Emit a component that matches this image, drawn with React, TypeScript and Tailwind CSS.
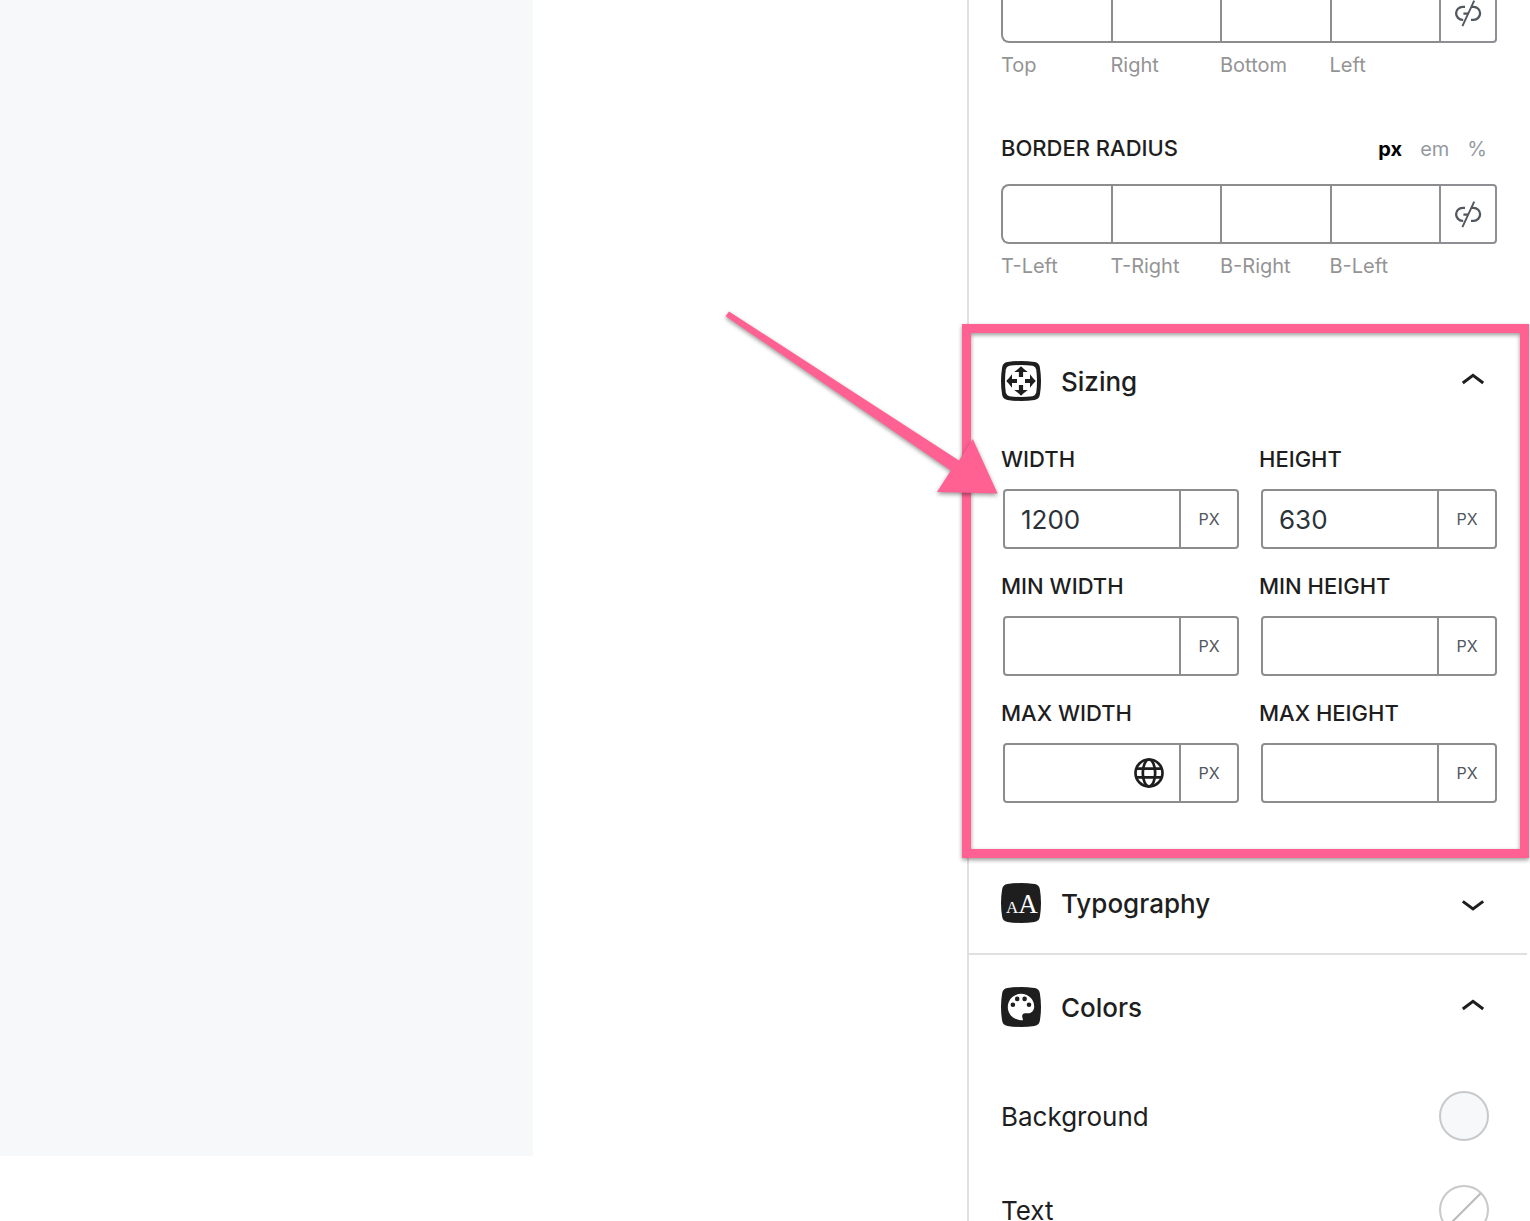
import type { ReactNode } from "react";

const SQUIRCLE =
  "M6.5 1.1Q20 -1.1 33.5 1.1Q38.2 1.8 38.9 6.5Q41.1 20 38.9 33.5Q38.2 38.2 33.5 38.9Q20 41.1 6.5 38.9Q1.8 38.2 1.1 33.5Q-1.1 20 1.1 6.5Q1.8 1.8 6.5 1.1Z";

function SizingIcon() {
  return (
    <svg viewBox="0 0 40 40" className="size-10 shrink-0" aria-hidden="true">
      <path d={SQUIRCLE} fill="#1e1e1e" />
      <path
        d="M8.4 4.8Q20 3.2 31.6 4.8Q34.6 5.4 35.2 8.4Q36.8 20 35.2 31.6Q34.6 34.6 31.6 35.2Q20 36.8 8.4 35.2Q5.4 34.6 4.8 31.6Q3.2 20 4.8 8.4Q5.4 5.4 8.4 4.8Z"
        fill="#fff"
      />
      {[0, 90, 180, 270].map((angle) => (
        <path
          key={angle}
          d="M20 5.2Q22.4 7.8 26.8 11H22.1V16H17.9V11H13.2Q17.6 7.8 20 5.2Z"
          transform={`rotate(${angle} 20 20)`}
          fill="#1e1e1e"
        />
      ))}
    </svg>
  );
}

function TypographyIcon() {
  return (
    <svg viewBox="0 0 40 40" className="size-10 shrink-0" aria-hidden="true">
      <path d={SQUIRCLE} fill="#1e1e1e" />
      <text x="5" y="30" fill="#fff" fontFamily="'Liberation Serif', serif">
        <tspan fontSize="17">A</tspan>
        <tspan fontSize="27">A</tspan>
      </text>
    </svg>
  );
}

function ColorsIcon() {
  return (
    <svg viewBox="0 0 40 40" className="size-10 shrink-0" aria-hidden="true">
      <path d={SQUIRCLE} fill="#1e1e1e" />
      <path
        d="M20 6.8C12.4 6.8 6.8 12.8 6.8 20C6.8 27.2 12.4 33.2 21.8 33.2C22.2 32 21 30.4 21.2 28.8C21.4 27.2 22.4 26.3 24 26.3H26.8C30.4 26.3 33.2 23.6 33.2 19.4C33.2 12.4 27.4 6.8 20 6.8Z"
        fill="#fff"
      />
      <g fill="#1e1e1e">
        <circle cx="11.9" cy="17.7" r="2.3" />
        <circle cx="16.2" cy="11.9" r="2.3" />
        <circle cx="23.6" cy="11.9" r="2.3" />
        <circle cx="28" cy="17.7" r="2.3" />
      </g>
    </svg>
  );
}

function UnlinkIcon() {
  return (
    <svg
      viewBox="0 0 28 28"
      className="size-7"
      fill="none"
      stroke="#50575e"
      strokeWidth="2.3"
      aria-hidden="true"
    >
      <path d="M11 7.8H8.6A6.5 6.5 0 0 0 8.6 20.8H9.2" />
      <path d="M9.4 14.6H14" />
      <path d="M17.6 7.8H19.6A6.5 6.5 0 0 1 19.6 20.8H17" />
      <path d="M20.2 1.6L8.4 27.2" strokeWidth="1.9" />
    </svg>
  );
}

function GlobeIcon() {
  return (
    <svg
      viewBox="0 0 30 30"
      className="size-[30px]"
      fill="none"
      stroke="#1e1e1e"
      strokeWidth="2.7"
      aria-hidden="true"
    >
      <circle cx="15" cy="15" r="13.5" />
      <ellipse cx="15" cy="15" rx="6.2" ry="13.5" />
      <path d="M2.2 10.6H27.8M2.2 19.4H27.8" />
    </svg>
  );
}

function Chevron({ open }: { open: boolean }) {
  return (
    <svg
      viewBox="0 0 24 16"
      className="h-4 w-6"
      fill="none"
      stroke="#1e1e1e"
      strokeWidth="3"
      aria-hidden="true"
    >
      <path d={open ? "M1.8 10L12 2.4L22.2 10" : "M1.8 6.4L12 14L22.2 6.4"} />
    </svg>
  );
}

function SidesControl({ name, sides }: { name: string; sides: string[] }) {
  return (
    <div className="flex items-start">
      <div className="grid flex-1 grid-cols-4">
        {sides.map((side) => (
          <label key={side} className="group flex flex-col-reverse gap-2">
            <span className="text-[20px] leading-7 text-[#949494]">{side}</span>
            <input
              type="text"
              className="h-[60px] w-full border-y-2 border-l-2 border-[#8d8d8f] px-4 text-[26px] outline-none group-first:rounded-l-lg"
            />
          </label>
        ))}
      </div>
      <button
        type="button"
        aria-label={`Link ${name}`}
        className="flex h-[60px] w-[58px] items-center justify-center rounded-r border-2 border-[#8d8f94]"
      >
        <UnlinkIcon />
      </button>
    </div>
  );
}

function SizeField({
  id,
  label,
  value,
  global,
}: {
  id: string;
  label: string;
  value?: string;
  global?: boolean;
}) {
  return (
    <div className="flex flex-col gap-[18px]">
      <label htmlFor={id} className="text-[22px] leading-6 font-medium uppercase">
        {label}
      </label>
      <div className="ml-0.5 flex h-[60px] rounded border-2 border-[#8d8d8f]">
        <div className="relative min-w-0 flex-1">
          <input
            id={id}
            type="text"
            defaultValue={value}
            className="h-full w-full px-4 text-[26px] text-[#2c3338] outline-none"
          />
          {global && (
            <span className="absolute inset-y-0 right-[15px] flex items-center">
              <GlobeIcon />
            </span>
          )}
        </div>
        <button
          type="button"
          aria-label={`${label} unit`}
          className="w-[58px] border-l-2 border-[#8d8d8f] text-base text-[#50575e]"
        >
          PX
        </button>
      </div>
    </div>
  );
}

function PanelHeader({ icon, title, open }: { icon: ReactNode; title: string; open: boolean }) {
  return (
    <button
      type="button"
      aria-expanded={open}
      className="flex w-full items-center justify-between pr-3 text-left"
    >
      <span className="flex items-center gap-5">
        {icon}
        <span className="pt-0.5 text-[26px] leading-[38px] font-medium">{title}</span>
      </span>
      <Chevron open={open} />
    </button>
  );
}

function Highlight() {
  return (
    <>
      <div className="pointer-events-none absolute -top-[5px] -right-0.5 -bottom-[9px] -left-[7px] border-[9px] border-[#ff6192] drop-shadow-[0_2px_2px_rgba(0,0,0,0.4)]" />
      <svg
        viewBox="0 0 280 190"
        className="pointer-events-none absolute -top-5 -left-[248px] h-[190px] w-[280px] drop-shadow-[0_2px_2px_rgba(0,0,0,0.4)]"
        aria-hidden="true"
      >
        <path
          d="M8 2.5L238 151.5L251.8 130L276.6 184.5L216 183L229.8 161.5L4.6 7.2Z"
          fill="#ff6192"
        />
      </svg>
    </>
  );
}

const sizes = [
  { id: "width", label: "Width", value: "1200" },
  { id: "height", label: "Height", value: "630" },
  { id: "min-width", label: "Min Width" },
  { id: "min-height", label: "Min Height" },
  { id: "max-width", label: "Max Width", global: true },
  { id: "max-height", label: "Max Height" },
];

export default function App() {
  return (
    <div className="flex h-screen overflow-hidden bg-white pr-[3px] font-['Inter',sans-serif] text-[#1e1e1e]">
      <main className="flex min-w-0 flex-1 pb-[65px]">
        <div className="w-[55.1%] bg-[#f7f8fa]" />
      </main>

      <aside className="w-[560px] shrink-0 border-l-2 border-[#e0e0e0]">
        {/* Borders, scrolled part way out of view */}
        <section className="-mt-[17px] border-b-2 border-[#e0e0e0] pr-[30px] pb-[47px] pl-8">
          <SidesControl name="border width" sides={["Top", "Right", "Bottom", "Left"]} />
          <div className="mt-[57px] mb-6 flex items-center justify-between pr-2.5">
            <h3 className="text-[22px] leading-6 font-medium uppercase">Border Radius</h3>
            <div className="flex gap-[18px] pt-0.5 text-[20px] leading-[22px] text-[#949a9f]">
              <button type="button" className="font-bold text-black">
                px
              </button>
              <button type="button">em</button>
              <button type="button">%</button>
            </div>
          </div>
          <SidesControl name="border radius" sides={["T-Left", "T-Right", "B-Right", "B-Left"]} />
        </section>

        <section className="relative border-b-2 border-[#e0e0e0] pt-8 pr-[30px] pb-[46px] pl-8">
          <PanelHeader icon={<SizingIcon />} title="Sizing" open />
          <div className="mt-[46px] grid grid-cols-2 gap-x-5 gap-y-[25px]">
            {sizes.map((size) => (
              <SizeField key={size.id} {...size} />
            ))}
          </div>
          <Highlight />
        </section>

        <section className="border-b-2 border-[#e0e0e0] pt-8 pr-[30px] pb-[30px] pl-8">
          <PanelHeader icon={<TypographyIcon />} title="Typography" open={false} />
        </section>

        <section className="pt-8 pr-[30px] pl-8">
          <PanelHeader icon={<ColorsIcon />} title="Colors" open />
          <div className="mt-16 flex flex-col gap-11 pr-2 text-[26px]">
            <div className="flex h-[50px] items-center justify-between">
              <span>Background</span>
              <button
                type="button"
                aria-label="Background color"
                className="size-[50px] rounded-full border-2 border-[#c8c9cb] bg-[#f7f8fa]"
              />
            </div>
            <div className="flex h-[50px] items-center justify-between">
              <span>Text</span>
              <button
                type="button"
                aria-label="Text color"
                className="size-[50px] rounded-full border-2 border-[#c8c9cb]"
              >
                <svg viewBox="0 0 46 46" className="size-full" stroke="#b9babc" strokeWidth="2" aria-hidden="true">
                  <path d="M6.5 39.5L39.5 6.5" />
                </svg>
              </button>
            </div>
          </div>
        </section>
      </aside>
    </div>
  );
}
